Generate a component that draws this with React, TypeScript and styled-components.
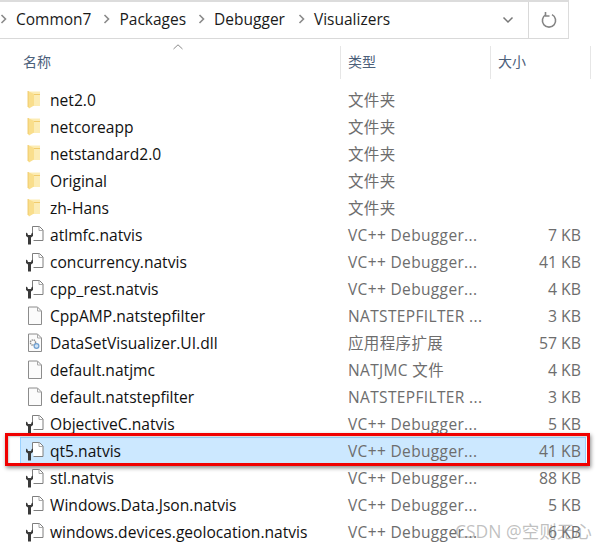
import styled, { createGlobalStyle } from "styled-components";

type FileKind = "folder" | "natvis" | "blank" | "dll";

type FileRow = {
  name: string;
  type: string;
  size?: string;
  kind: FileKind;
  selected?: boolean;
};

const crumbs = [
  { label: "Common7", gap: 12 },
  { label: "Packages", gap: 12 },
  { label: "Debugger", gap: 13 },
  { label: "Visualizers", gap: 0 },
];

const DBG = "VC++ Debugger...";

const files: FileRow[] = [
  { name: "net2.0", type: "文件夹", kind: "folder" },
  { name: "netcoreapp", type: "文件夹", kind: "folder" },
  { name: "netstandard2.0", type: "文件夹", kind: "folder" },
  { name: "Original", type: "文件夹", kind: "folder" },
  { name: "zh-Hans", type: "文件夹", kind: "folder" },
  { name: "atlmfc.natvis", type: DBG, size: "7 KB", kind: "natvis" },
  { name: "concurrency.natvis", type: DBG, size: "41 KB", kind: "natvis" },
  { name: "cpp_rest.natvis", type: DBG, size: "4 KB", kind: "natvis" },
  { name: "CppAMP.natstepfilter", type: "NATSTEPFILTER ...", size: "3 KB", kind: "blank" },
  { name: "DataSetVisualizer.UI.dll", type: "应用程序扩展", size: "57 KB", kind: "dll" },
  { name: "default.natjmc", type: "NATJMC 文件", size: "4 KB", kind: "blank" },
  { name: "default.natstepfilter", type: "NATSTEPFILTER ...", size: "3 KB", kind: "blank" },
  { name: "ObjectiveC.natvis", type: DBG, size: "5 KB", kind: "natvis" },
  { name: "qt5.natvis", type: DBG, size: "41 KB", kind: "natvis", selected: true },
  { name: "stl.natvis", type: DBG, size: "88 KB", kind: "natvis" },
  { name: "Windows.Data.Json.natvis", type: DBG, size: "5 KB", kind: "natvis" },
  { name: "windows.devices.geolocation.natvis", type: DBG, size: "6 KB", kind: "natvis" },
];

const GlobalStyle = createGlobalStyle`
  html, body {
    margin: 0;
    padding: 0;
    background: #fff;
    overflow: hidden;
  }
  body {
    font-family: "Open Sans", "Noto Sans CJK SC", sans-serif;
  }
`;

const Window = styled.div`
  position: relative;
  width: 608px;
  height: 548px;
  overflow: hidden;
  background: #fff;
`;

const AddressBar = styled.div`
  box-sizing: border-box;
  width: 569px;
  height: 39px;
  display: flex;
  align-items: center;
  border-top: 2px solid #dcdcdc;
  border-right: 1px solid #dcdcdc;
  border-bottom: 1px solid #d9d9d9;
`;

const Crumbs = styled.div`
  flex: 1;
  display: flex;
  align-items: center;
  padding-bottom: 2px;
`;

const CrumbItem = styled.div`
  display: flex;
  align-items: center;
`;

const Crumb = styled.span`
  font-size: 15.5px;
  color: #1a1a1a;
  margin: 0 ${(p) => p.$gap}px 0 8px;
`;

const BarButton = styled.div`
  width: 39px;
  height: 100%;
  display: flex;
  align-items: center;
  justify-content: center;
  border-left: 1px solid #d9d9d9;
`;

const DropButton = styled.div`
  width: 40px;
  display: flex;
  justify-content: center;
`;

const Header = styled.div`
  position: relative;
  height: 41px;
  display: grid;
  grid-template-columns: 341px 150px 100px;
  padding-top: 7px;
  box-sizing: border-box;
`;

const HeaderCell = styled.div`
  box-sizing: border-box;
  height: 33px;
  padding: 5px 0 0 ${(p) => p.$pad}px;
  font-size: 14px;
  color: #4c607a;
  border-right: 1px solid #e6e6e6;
`;

const SortCaret = styled.svg`
  position: absolute;
  left: 173px;
  top: 5px;
`;

const List = styled.div`
  padding: 6px 0 0 20px;
`;

const Row = styled.div`
  position: relative;
  box-sizing: border-box;
  width: 566px;
  height: 27px;
  display: grid;
  grid-template-columns: 29px 298px 150px 1fr;
  align-items: center;
  background: ${(p) => (p.$selected ? "#cce8ff" : "transparent")};
  border: 1px solid ${(p) => (p.$selected ? "#99d1ff" : "transparent")};

  ${(p) =>
    p.$selected &&
    `
    &::after {
      content: "";
      position: absolute;
      left: -16px;
      top: -5px;
      width: 579px;
      height: 27px;
      border: 3px solid #f00000;
      box-shadow: 1px 2px 4px rgba(0, 0, 0, 0.45), inset 1px 1px 2px rgba(0, 0, 0, 0.2);
    }
  `}
`;

const IconCell = styled.div`
  display: flex;
  align-items: center;
  padding-left: 3px;
`;

const Name = styled.div`
  font-size: 15.6px;
  color: #111;
  white-space: nowrap;
`;

const TypeCell = styled.div`
  font-size: 15.5px;
  letter-spacing: 0.35px;
  color: #6d6d6d;
  white-space: nowrap;
`;

const SizeCell = styled.div`
  font-size: 15.8px;
  color: #6d6d6d;
  text-align: right;
  padding-right: 4px;
  white-space: nowrap;
`;

const Watermark = styled.div`
  position: absolute;
  left: 455px;
  top: 518px;
  font-size: 17.5px;
  color: rgba(130, 130, 130, 0.5);
  white-space: nowrap;
`;

const Chevron = () => (
  <svg width="8" height="12" viewBox="0 0 8 12">
    <path d="M1.5 2 L5.5 6 L1.5 10" fill="none" stroke="#8a8a8a" strokeWidth="1.6" />
  </svg>
);

const FileIcon = ({ kind }: { kind: FileKind }) => {
  if (kind === "folder") {
    return (
      <svg width="20" height="20" viewBox="0 0 20 20">
        <path d="M4 1.5 H16 V16 H4 Z" fill="#fcecb4" />
        <path d="M4 1 L10 4 V15.5 L5 18.5 L4 17 Z" fill="#f9de8c" />
        <path d="M10 4 H16 V4.8 H10 Z" fill="#eec35a" />
        <path d="M4 1 V17" stroke="#eec35a" strokeWidth="0.8" />
      </svg>
    );
  }
  if (kind === "natvis") {
    return (
      <svg width="20" height="20" viewBox="0 0 20 20">
        <path d="M8.5 8 V1.5 H15.5 L19 5 V15.5 H9.5" fill="#fff" stroke="#7f7f7f" strokeWidth="1" />
        <path d="M15 1.5 V5.5 H19" fill="none" stroke="#a8a8a8" strokeWidth="1" />
        <path d="M2 7.5 V11 L4 12.5 V19.5 H7 V12.5 L9 11 V7.5 L7.2 8.8 V10 H3.8 V8.8 Z" fill="#3a3a3a" />
      </svg>
    );
  }
  return (
    <svg width="20" height="20" viewBox="0 0 20 20">
      <path d="M4.5 1 H13.5 L17.5 5 V18.5 H4.5 Z" fill="#fbfbfb" stroke="#8c8c8c" strokeWidth="1" />
      <path d="M13.5 1 V5 H17.5" fill="none" stroke="#a8a8a8" strokeWidth="1" />
      {kind === "dll" && (
        <>
          <circle cx="9" cy="9.5" r="2.6" fill="none" stroke="#8f8f8f" strokeWidth="1.4" strokeDasharray="1.4 0.7" />
          <circle cx="12.5" cy="13" r="2.4" fill="#cfe2f4" stroke="#6f9fd0" strokeWidth="1.2" />
        </>
      )}
    </svg>
  );
};

export default function App() {
  return (
    <Window>
      <GlobalStyle />
      <AddressBar>
        <Crumbs>
          {crumbs.map((crumb) => (
            <CrumbItem key={crumb.label}>
              <Chevron />
              <Crumb $gap={crumb.gap}>{crumb.label}</Crumb>
            </CrumbItem>
          ))}
        </Crumbs>
        <DropButton>
          <svg width="12" height="8" viewBox="0 0 12 8">
            <path d="M1.5 1.5 L6 6 L10.5 1.5" fill="none" stroke="#777" strokeWidth="1.5" />
          </svg>
        </DropButton>
        <BarButton>
          <svg width="18" height="18" viewBox="0 0 18 18">
            <path
              d="M6 3.6 A6.6 6.6 0 1 0 12 3.6"
              fill="none"
              stroke="#858585"
              strokeWidth="1.6"
            />
            <path d="M5.5 1 V5 H9.5" fill="none" stroke="#858585" strokeWidth="1.6" />
          </svg>
        </BarButton>
      </AddressBar>

      <Header>
        <SortCaret width="10" height="6" viewBox="0 0 10 6">
          <path d="M0.5 5 L5 0.8 L9.5 5" fill="none" stroke="#8a8a8a" strokeWidth="1" />
        </SortCaret>
        <HeaderCell $pad={23}>名称</HeaderCell>
        <HeaderCell $pad={7}>类型</HeaderCell>
        <HeaderCell $pad={7}>大小</HeaderCell>
      </Header>

      <List>
        {files.map((file) => (
          <Row key={file.name} $selected={file.selected}>
            <IconCell>
              <FileIcon kind={file.kind} />
            </IconCell>
            <Name>{file.name}</Name>
            <TypeCell>{file.type}</TypeCell>
            <SizeCell>{file.size}</SizeCell>
          </Row>
        ))}
      </List>

      <Watermark>CSDN @空则无心</Watermark>
    </Window>
  );
}
